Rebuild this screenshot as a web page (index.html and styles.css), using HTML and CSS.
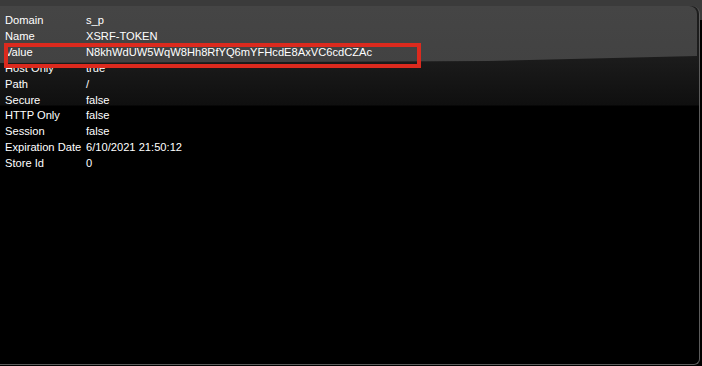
FILE: index.html
```html
<!DOCTYPE html>
<html>
<head>
<meta charset="utf-8">
<link rel="stylesheet" href="styles.css">
</head>
<body>
<div class="panel">
  <div class="gloss"></div>
  <table class="props">
    <tr><td class="k">Domain</td><td>s_p</td></tr>
    <tr><td class="k">Name</td><td>XSRF-TOKEN</td></tr>
    <tr><td class="k">Value</td><td>N8khWdUW5WqW8Hh8RfYQ6mYFHcdE8AxVC6cdCZAc</td></tr>
    <tr><td class="k">Host Only</td><td>true</td></tr>
    <tr><td class="k">Path</td><td>/</td></tr>
    <tr><td class="k">Secure</td><td>false</td></tr>
    <tr><td class="k">HTTP Only</td><td>false</td></tr>
    <tr><td class="k">Session</td><td>false</td></tr>
    <tr><td class="k">Expiration Date</td><td>6/10/2021 21:50:12</td></tr>
    <tr><td class="k">Store Id</td><td>0</td></tr>
  </table>
  <div class="highlight"></div>
</div>
</body>
</html>
```

FILE: styles.css
```css
html, body {
  margin: 0;
  padding: 0;
  width: 702px;
  height: 366px;
  overflow: hidden;
}
body {
  background: linear-gradient(to bottom, #3b3b3b 0, #3b3b3b 20px, #000 20px);
  font-family: "Liberation Sans", Arial, sans-serif;
  font-size: 11.15px;
  color: #fff;
}
.panel {
  position: relative;
  box-sizing: border-box;
  margin-top: 6px;
  margin-left: -1px;
  width: 701px;
  height: 359px;
  padding-top: 6px;
  border-right: 1px solid #5c5c5c;
  border-bottom: 1px solid #5c5c5c;
  border-top-right-radius: 8px;
  border-bottom-right-radius: 6px;
  background: linear-gradient(to bottom, #1d1d1d 0, #1c1c1c 50px, #0f0f0f 99px, #000 100px, #000 100%);
}
.gloss {
  position: absolute;
  top: 0;
  left: 0;
  right: 2px;
  height: 58px;
  border-top-right-radius: 8px;
  background: linear-gradient(to bottom, #454545, #424242);
  clip-path: polygon(0 0, 100% 0, 100% 50px, 70% 55px, 40% 56px, 0 57px);
}
.props {
  position: relative;
  border-collapse: collapse;
  margin-left: 6px;
  margin-top: 1px;
}
.props td {
  padding: 0;
  height: 15.9px;
  line-height: 15.9px;
  white-space: nowrap;
  vertical-align: top;
}
.props td.k {
  width: 81px;
}
.highlight {
  position: absolute;
  left: 5px;
  top: 37px;
  width: 409px;
  height: 17px;
  border: 4.5px solid #dc2a1e;
}
```
